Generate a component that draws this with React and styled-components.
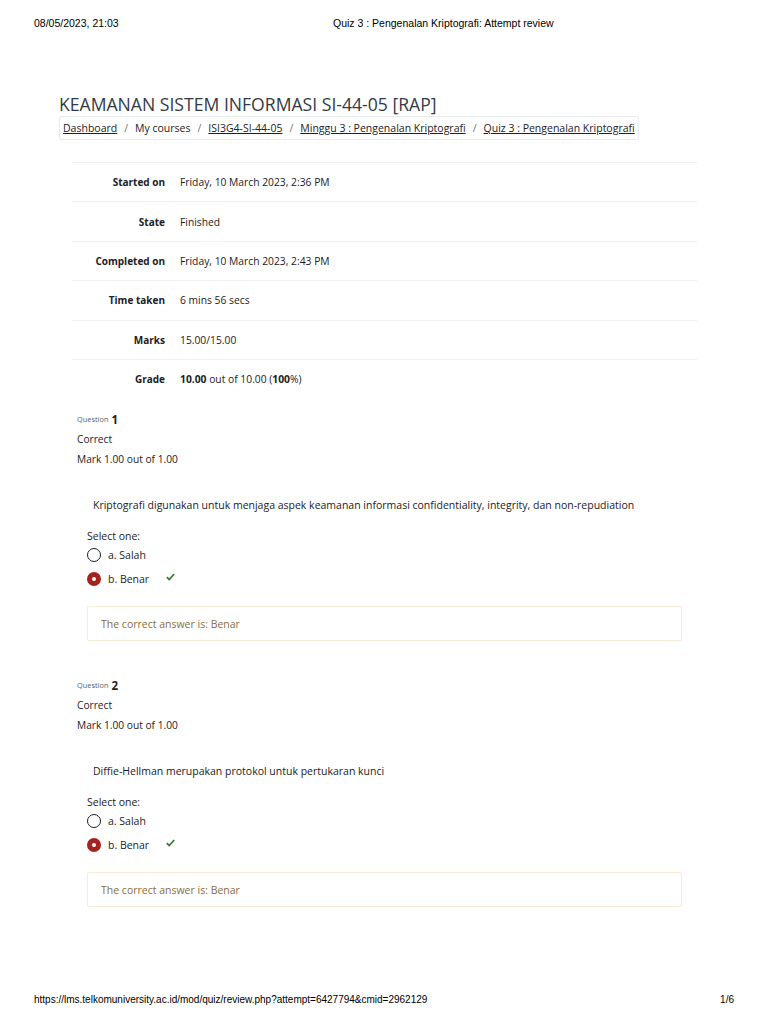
import React from 'react';
import styled, { createGlobalStyle } from 'styled-components';

const GlobalStyle = createGlobalStyle`
  html, body {
    margin: 0;
    padding: 0;
    background: #fff;
  }
  body {
    font-family: 'Open Sans', 'Noto Sans', sans-serif;
    color: #1d2125;
  }
`;

const Page = styled.div`
  min-height: 1024px;
  display: flex;
  flex-direction: column;
`;

const PrintBar = styled.div`
  height: 46px;
  display: flex;
  align-items: center;
  padding: 0 34px;
  font-family: 'Liberation Sans', Arial, sans-serif;
  font-size: 10.5px;
  color: #000;
`;

const PrintDate = styled.span`
  width: 299px;
`;

const Main = styled.main`
  flex: 1;
  padding-left: 59px;
  padding-top: 46px;
`;

const CourseTitle = styled.h1`
  margin: 0;
  font-size: 17.6px;
  line-height: 24px;
  font-weight: 400;
  color: #343a45;
`;

const Breadcrumb = styled.nav`
  display: flex;
  width: fit-content;
  align-items: center;
  height: 22px;
  padding: 0 3px;
  border: 1px solid #e9ecef;
  border-radius: 2px;
  font-size: 10.5px;
`;

const Crumb = styled.a`
  color: #1d2125;
  text-decoration: ${(p) => (p.$plain ? 'none' : 'underline')};
`;

const Sep = styled.span`
  color: #6a737b;
  margin: 0 7px;
`;

const Summary = styled.div`
  margin: 22px 0 0 13px;
  width: 625px;
`;

const Row = styled.div`
  display: grid;
  grid-template-columns: 100px 1fr;
  align-items: center;
  height: 39.4px;
  box-sizing: border-box;
  border-top: 1px solid #eef0f2;
`;

const Label = styled.div`
  text-align: right;
  padding-right: 7px;
  font-weight: 700;
  font-size: 10px;
`;

const Value = styled.div`
  padding-left: 8px;
  font-size: 10.3px;
`;

const Question = styled.section`
  margin-top: ${(p) => p.$top}px;
`;

const Info = styled.div`
  padding-left: 18px;
  font-size: 10.2px;
`;

const InfoLine = styled.div`
  height: 20px;
  display: flex;
  align-items: center;
`;

const Small = styled.span`
  font-size: 7.4px;
  color: #5a6169;
  margin-right: 3px;
`;

const QNo = styled.span`
  font-size: 11.5px;
  font-weight: 700;
`;

const Content = styled.div`
  padding-left: 28px;
  width: 595px;
  font-size: 10.5px;
`;

const Prompt = styled.div`
  margin-top: ${(p) => p.$top}px;
  padding-left: 6px;
  line-height: 20px;
`;

const SelectOne = styled.div`
  margin-top: 14px;
  line-height: 14px;
`;

const Option = styled.div`
  height: 24px;
  display: flex;
  align-items: center;
`;

const Radio = styled.span`
  width: 14px;
  height: 14px;
  box-sizing: border-box;
  border-radius: 50%;
  margin-right: 7px;
  display: flex;
  align-items: center;
  justify-content: center;
  border: ${(p) => (p.$checked ? 'none' : '1.6px solid #1d2125')};
  background: ${(p) => (p.$checked ? '#a4231f' : '#fff')};

  &::after {
    content: '';
    display: ${(p) => (p.$checked ? 'block' : 'none')};
    width: 4px;
    height: 4px;
    border-radius: 50%;
    background: #fff;
  }
`;

const Check = styled.svg`
  margin-left: 17px;
  margin-top: -4px;
`;

const Feedback = styled.div`
  margin-top: 15px;
  height: 35px;
  box-sizing: border-box;
  border: 1px solid #f6ecd8;
  border-radius: 2px;
  padding-left: 13px;
  display: flex;
  align-items: center;
  color: #8a6d3b;
`;

const Footer = styled.footer`
  height: 50px;
  display: flex;
  align-items: center;
  justify-content: space-between;
  padding: 0 34px;
  font-family: 'Liberation Sans', Arial, sans-serif;
  font-size: 10px;
  color: #000;
`;

const summary = [
  ['Started on', 'Friday, 10 March 2023, 2:36 PM'],
  ['State', 'Finished'],
  ['Completed on', 'Friday, 10 March 2023, 2:43 PM'],
  ['Time taken', '6 mins 56 secs'],
  ['Marks', '15.00/15.00'],
];

const questions = [
  {
    no: 1,
    top: 11,
    promptTop: 26,
    text: 'Kriptografi digunakan untuk menjaga aspek keamanan informasi confidentiality, integrity, dan non-repudiation',
  },
  {
    no: 2,
    top: 34,
    promptTop: 26,
    text: 'Diffie-Hellman merupakan protokol untuk pertukaran kunci',
  },
];

const Tick = () => (
  <Check width="9" height="8" viewBox="0 0 9 8">
    <path d="M0.8 4.2 L3.2 6.6 L8.2 1" fill="none" stroke="#357a32" strokeWidth="1.7" />
  </Check>
);

const App = () => {
  return (
    <Page>
      <GlobalStyle />
      <PrintBar>
        <PrintDate>08/05/2023, 21:03</PrintDate>
        <span>Quiz 3 : Pengenalan Kriptografi: Attempt review</span>
      </PrintBar>
      <Main>
        <CourseTitle>KEAMANAN SISTEM INFORMASI SI-44-05 [RAP]</CourseTitle>
        <Breadcrumb>
          <Crumb href="#">Dashboard</Crumb>
          <Sep>/</Sep>
          <Crumb $plain>My courses</Crumb>
          <Sep>/</Sep>
          <Crumb href="#">ISI3G4-SI-44-05</Crumb>
          <Sep>/</Sep>
          <Crumb href="#">Minggu 3 : Pengenalan Kriptografi</Crumb>
          <Sep>/</Sep>
          <Crumb href="#">Quiz 3 : Pengenalan Kriptografi</Crumb>
        </Breadcrumb>
        <Summary>
          {summary.map(([k, v]) => (
            <Row key={k}>
              <Label>{k}</Label>
              <Value>{v}</Value>
            </Row>
          ))}
          <Row>
            <Label>Grade</Label>
            <Value>
              <b>10.00</b> out of 10.00 (<b>100</b>%)
            </Value>
          </Row>
        </Summary>
        {questions.map((q) => (
          <Question key={q.no} $top={q.top}>
            <Info>
              <InfoLine>
                <Small>Question</Small>
                <QNo>{q.no}</QNo>
              </InfoLine>
              <InfoLine>Correct</InfoLine>
              <InfoLine>Mark 1.00 out of 1.00</InfoLine>
            </Info>
            <Content>
              <Prompt $top={q.promptTop}>{q.text}</Prompt>
              <SelectOne>Select one:</SelectOne>
              <Option>
                <Radio />
                a. Salah
              </Option>
              <Option>
                <Radio $checked />
                b. Benar
                <Tick />
              </Option>
              <Feedback>The correct answer is: Benar</Feedback>
            </Content>
          </Question>
        ))}
      </Main>
      <Footer>
        <span>https://lms.telkomuniversity.ac.id/mod/quiz/review.php?attempt=6427794&amp;cmid=2962129</span>
        <span>1/6</span>
      </Footer>
    </Page>
  );
};

export default App;
